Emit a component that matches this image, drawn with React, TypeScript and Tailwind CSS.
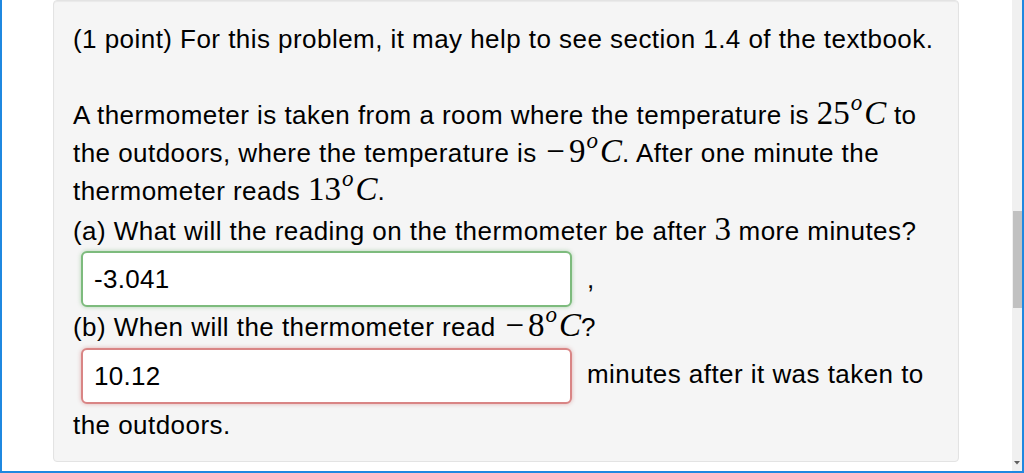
import React from "react";

function Sup({ children }: { children: React.ReactNode }) {
  return (
    <span className="relative -top-[14px] ml-[1px] mr-[2px] text-[23px] leading-none italic">{children}</span>
  );
}

function Deg({ pre, minus }: { pre: string; minus?: boolean }) {
  return (
    <span className="font-['Liberation_Serif','Times_New_Roman',serif] text-[33px] leading-none tracking-normal">
      {minus ? <span className="pl-[2px] pr-[4px]">−</span> : null}
      {pre}
      <Sup>o</Sup>
      <span className="italic">C</span>
    </span>
  );
}

export default function App() {
  return (
    <div className="flex h-[473px] w-[1024px] overflow-hidden border-b-2 border-l-2 border-r-2 border-[#1f88e0] bg-white font-['Liberation_Sans',Arial,sans-serif] text-black">
      <div className="flex-1 bg-white">
        <div className="ml-[51px] w-[906px] rounded-[4px] border border-[#e3e3e3] bg-[#f5f5f5] px-[19px] pb-[17px] pt-[19px] shadow-[inset_0_1px_1px_rgba(0,0,0,0.05)]">
          <div className="text-[26px] leading-[38px] tracking-[0.45px]">
            <p>(1 point) For this problem, it may help to see section 1.4 of the textbook.</p>
            <p className="mt-[38px]">
              A thermometer is taken from a room where the temperature is <Deg pre="25" /> to the
              outdoors, where the temperature is <Deg pre="9" minus />. After one minute the thermometer
              reads <Deg pre="13" />.
            </p>
            <p className="mt-[2px]">
              (a) What will the reading on the thermometer be after{" "}
              <span className="font-['Liberation_Serif','Times_New_Roman',serif] text-[33px] leading-none tracking-normal">
                3
              </span>{" "}
              more minutes?
            </p>
            <div className="flex items-baseline pb-[1px] pl-[8px] pt-[1px]">
              <input
                readOnly
                value="-3.041"
                className="h-[56px] w-[491px] rounded-[6px] border-2 border-[#7dbb7d] bg-white pl-[11px] font-['Liberation_Sans',Arial,sans-serif] text-[26px] tracking-[0.3px] text-black shadow-[0_0_4px_rgba(90,170,90,0.45)] outline-none"
              />
              <span className="ml-[15px]">,</span>
            </div>
            <p>
              (b) When will the thermometer read <Deg pre="8" minus />?
            </p>
            <div className="flex items-baseline pb-[2px] pl-[8px] pt-[2px]">
              <input
                readOnly
                value="10.12"
                className="h-[56px] w-[491px] rounded-[6px] border-2 border-[#d98585] bg-white pl-[11px] font-['Liberation_Sans',Arial,sans-serif] text-[26px] tracking-[0.3px] text-black shadow-[0_0_4px_rgba(200,90,90,0.45)] outline-none"
              />
              <span className="ml-[15px] -translate-y-[2px]">minutes after it was taken to</span>
            </div>
            <p>the outdoors.</p>
          </div>
        </div>
      </div>
      <div className="flex w-[10px] flex-col bg-[#f0f0f0]">
        <div className="ml-[1px] mt-[211px] h-[97px] w-[9px] bg-[#c1c1c1]" />
        <div className="flex-1" />
        <div className="flex h-[10px] items-start justify-center">
          <svg width="6" height="4" viewBox="0 0 6 4">
            <path d="M0 0 H6 L3 3.5 Z" fill="#606060" />
          </svg>
        </div>
      </div>
    </div>
  );
}
